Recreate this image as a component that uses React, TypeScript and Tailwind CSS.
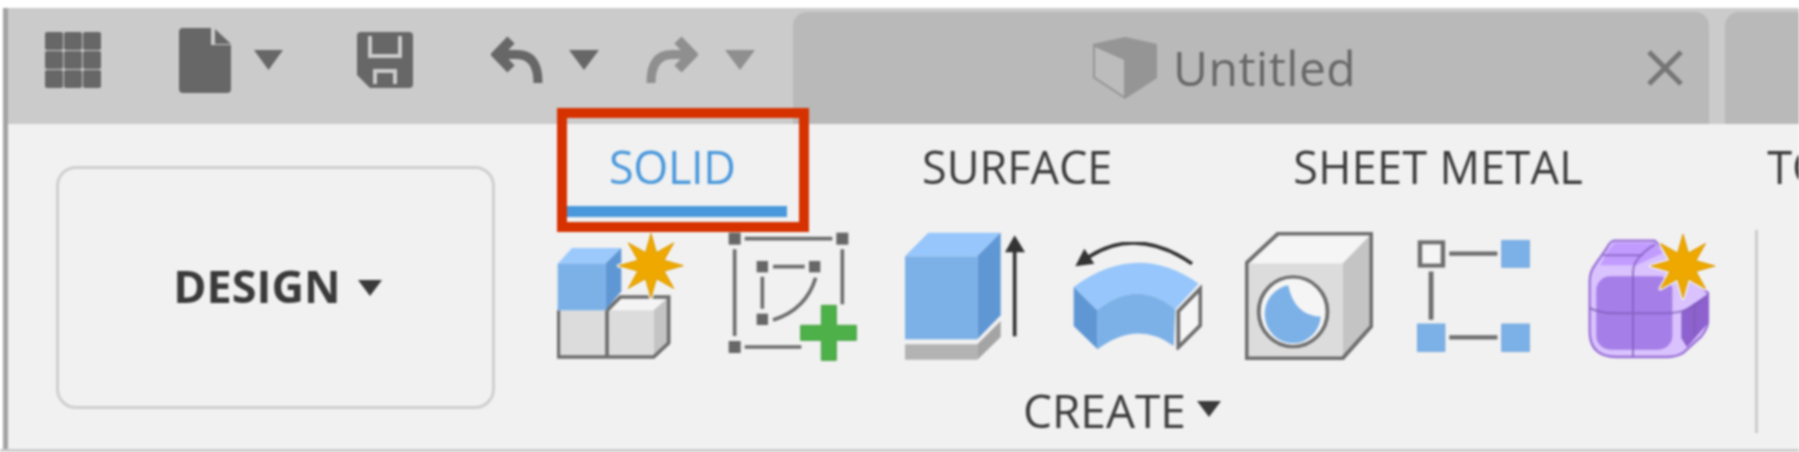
import React from 'react'

const tabs = [
  { label: 'SURFACE', gap: 'ml-[135px]' },
  { label: 'SHEET METAL', gap: 'ml-[181px] tracking-[0.3px]' },
  { label: 'TOOLS', gap: 'ml-[184px]' },
]

function Caret({ w, h, color, className }: { w: number; h: number; color: string; className?: string }) {
  return (
    <svg width={w} height={h} viewBox="0 0 30 20" preserveAspectRatio="none" className={`shrink-0 ${className ?? ''}`}>
      <polygon points="0,0 30,0 15,20" fill={color} />
    </svg>
  )
}

// eight pointed burst, used on the "new" icons
function Star({ cx, cy, r, halo = 11 }: { cx: number; cy: number; r: number; halo?: number }) {
  const pts: string[] = []
  for (let i = 0; i < 16; i++) {
    const a = (i * Math.PI) / 8 - Math.PI / 2
    const rad = i % 2 === 0 ? r : r * 0.44
    pts.push(`${cx + rad * Math.cos(a)},${cy + rad * Math.sin(a)}`)
  }
  const p = pts.join(' ')
  return (
    <g>
      <polygon points={p} fill="#f5f5f5" stroke="#f5f5f5" strokeWidth={halo} strokeLinejoin="round" />
      <polygon points={p} fill="#eea800" stroke="#d99a06" strokeWidth="3" />
    </g>
  )
}

function GridIcon() {
  const cells = [0, 19, 38]
  return (
    <svg width="56" height="56" viewBox="0 0 56 56" className="shrink-0">
      {cells.map((y) =>
        cells.map((x) => <rect key={`${x}-${y}`} x={x} y={y} width="18" height="18" rx="2" fill="#676767" />),
      )}
    </svg>
  )
}

function FileIcon() {
  return (
    <svg width="52" height="65" viewBox="0 0 52 65" className="shrink-0">
      <path d="M4 0H32V17H52V61Q52 65 48 65H4Q0 65 0 61V4Q0 0 4 0Z" fill="#676767" />
      <polygon points="36,1 52,16 36,16" fill="#676767" />
    </svg>
  )
}

function SaveIcon() {
  return (
    <svg width="56" height="56" viewBox="0 0 56 56" className="shrink-0">
      <path d="M4 0H52Q56 0 56 4V52Q56 56 52 56H13L0 43V4Q0 0 4 0Z" fill="#676767" />
      <path d="M13 4V24H43V4" fill="none" stroke="#cbcbcb" strokeWidth="4" />
      <path d="M18 52V39H38V52" fill="none" stroke="#cbcbcb" strokeWidth="4" />
    </svg>
  )
}

function UndoIcon({ color, flip }: { color: string; flip?: boolean }) {
  return (
    <svg width="52" height="48" viewBox="0 0 52 48" className={`shrink-0 ${flip ? '-scale-x-100' : ''}`}>
      <path d="M20 4L6 18.5L20 33" fill="none" stroke={color} strokeWidth="10" />
      <path d="M8 18.5H26Q47 18.5 47 47" fill="none" stroke={color} strokeWidth="9" />
    </svg>
  )
}

function CubeTabIcon() {
  return (
    <svg width="65" height="62" viewBox="0 0 65 62" className="shrink-0">
      <polygon points="1,7 33,0 65,7 65,41 33,62 1,41" fill="#959595" />
      <polygon points="3,10 32,23 32,59 3,40" fill="#bcbcbc" />
    </svg>
  )
}

function SolidNewIcon() {
  return (
    <svg width="127" height="127" viewBox="50 40 381 381" className="shrink-0">
      <polygon points="200,272 240,232 385,232 340,272" fill="#f4f4f4" />
      <polygon points="340,272 385,232 385,370 340,412" fill="#c4c4c4" />
      <rect x="52" y="272" width="288" height="140" fill="#dcdcdc" />
      <path d="M200 272L240 232H385V370L340 412H54V272M200 272V412" fill="none" stroke="#6e6e6e" strokeWidth="11" />
      <polygon points="52,132 95,85 243,85 195,132" fill="#9bc9fc" />
      <polygon points="195,132 243,85 243,215 195,272" fill="#5f97d5" />
      <rect x="52" y="132" width="143" height="140" fill="#7cb1e8" />
      <Star cx={332} cy={138} r={97} />
    </svg>
  )
}

function SketchIcon() {
  return (
    <svg width="129" height="129" viewBox="565 33 387 387" className="shrink-0">
      <g stroke="#6e6e6e" strokeWidth="11" fill="none">
        <path d="M615 53H878M585 85V345M908 85V250M615 378H785M700 137H795M668 167V263" />
        <path d="M828 170Q800 265 700 297" />
      </g>
      <g fill="#676767">
        <rect x="567" y="35" width="36" height="36" />
        <rect x="890" y="35" width="36" height="36" />
        <rect x="567" y="360" width="36" height="36" />
        <rect x="651" y="120" width="34" height="34" />
        <rect x="808" y="120" width="34" height="34" />
        <rect x="651" y="278" width="34" height="34" />
      </g>
      <path d="M845 253H890V313H950V358H890V418H845V358H783V313H845Z" fill="#4eb049" stroke="#46a241" strokeWidth="3" />
    </svg>
  )
}

function ExtrudeIcon() {
  return (
    <svg width="120" height="128" viewBox="75 35 360 384" className="shrink-0">
      <polygon points="75,372 292,372 292,418 75,418" fill="#b3b3b3" />
      <polygon points="292,372 362,302 362,350 292,418" fill="#a4a4a4" />
      <polygon points="75,108 145,37 362,37 292,108" fill="#96c6fb" />
      <polygon points="292,108 362,37 362,285 292,357" fill="#5f97d5" />
      <rect x="75" y="108" width="217" height="249" fill="#7cb1e8" />
      <path d="M404 348V90" stroke="#333" strokeWidth="11" />
      <polygon points="375,96 404,45 435,96" fill="#333" />
    </svg>
  )
}

function RevolveIcon() {
  return (
    <svg width="129" height="108" viewBox="578 60 387 324" className="shrink-0">
      <path d="M935 125Q770 12 625 105" fill="none" stroke="#333" strokeWidth="11" />
      <polygon points="585,133 642,125 612,80" fill="#333" />
      <path d="M580 195Q770 55 955 185L885 262Q770 167 650 265Z" fill="#96c6fb" />
      <path d="M650 265Q770 167 885 262L880 372Q770 293 652 382Z" fill="#7cb1e8" />
      <polygon points="580,195 650,265 652,382 580,312" fill="#5f97d5" />
      <polygon points="894,268 960,200 960,310 894,376" fill="#f5f5f5" stroke="#6e6e6e" strokeWidth="11" />
    </svg>
  )
}

function HoleIcon() {
  return (
    <svg width="128" height="128" viewBox="68 35 346 385" preserveAspectRatio="none" className="shrink-0">
      <polygon points="72,130 157,40 410,40 332,130" fill="#f5f5f5" />
      <polygon points="332,130 410,40 410,318 332,415" fill="#c4c4c4" />
      <rect x="72" y="130" width="260" height="285" fill="#dcdcdc" />
      <path d="M72 128L157 40H410V318L332 415H72Z" fill="none" stroke="#6e6e6e" strokeWidth="11" />
      <ellipse cx="198" cy="275" rx="93" ry="105" fill="#f5f5f5" stroke="#6e6e6e" strokeWidth="10" />
      <path d="M185 195A76 88 0 1 0 273 290Q200 285 185 195Z" fill="#7cb1e8" />
    </svg>
  )
}

function FormIcon() {
  return (
    <svg width="113" height="112" viewBox="533 60 305 337" preserveAspectRatio="none" className="shrink-0">
      <rect x="541" y="67" width="62" height="70" fill="#f5f5f5" stroke="#6e6e6e" strokeWidth="12" />
      <path d="M620 101H750M571 155V300M620 353H750" stroke="#6e6e6e" strokeWidth="13" />
      <g fill="#7cb1e8" stroke="#6fa5dc" strokeWidth="3">
        <rect x="762" y="61" width="74" height="81" />
        <rect x="534" y="313" width="74" height="82" />
        <rect x="762" y="313" width="74" height="82" />
      </g>
    </svg>
  )
}

function FormNewIcon() {
  return (
    <svg width="127" height="127" viewBox="25 25 381 381" className="shrink-0">
      <path d="M105 48H225L385 205V290Q385 310 365 335L310 385Q290 397 260 397H110Q30 397 30 320V170Q30 140 48 118L80 72Q92 48 105 48Z" fill="#d9c2fd" stroke="#9a72d8" strokeWidth="7" />
      <path d="M105 54H225L250 85L170 122H62L85 78Z" fill="#c29bff" />
      <rect x="50" y="155" width="228" height="220" rx="42" fill="#a67ee8" />
      <polygon points="305,262 385,208 385,295 322,368 305,340" fill="#8d61ce" />
      <g fill="none" stroke="#7f5db8" strokeWidth="6" opacity="0.75">
        <path d="M160 397V140Q160 100 225 60" />
        <path d="M30 250Q60 266 110 266H260Q330 266 385 210" />
        <path d="M345 235V335" />
        <path d="M70 92H190" />
      </g>
      <Star cx={310} cy={124} r={96} />
    </svg>
  )
}

export default function App() {
  return (
    <div className="h-[452px] w-full overflow-hidden bg-white pt-2 font-['Open_Sans',sans-serif] blur-[0.9px]">
      <div className="flex h-[441px] pl-[3px]">
        <div className="w-[5px] shrink-0 bg-[#a3a3a3]" />

        <div className="flex min-w-0 flex-1 flex-col">
          {/* Top bar */}
          <div className="flex h-[116px] shrink-0 items-start overflow-hidden bg-[#cbcbcb] pt-1">
            <div className="flex h-[96px] shrink-0 items-center">
              <div className="ml-[37px]"><GridIcon /></div>
              <div className="ml-[78px]"><FileIcon /></div>
              <Caret w={29} h={20} color="#676767" className="ml-[23px]" />
              <div className="ml-[74px]"><SaveIcon /></div>
              <div className="ml-[78px]"><UndoIcon color="#676767" /></div>
              <Caret w={30} h={20} color="#676767" className="ml-[26px]" />
              <div className="ml-[47px]"><UndoIcon color="#8f8f8f" flip /></div>
              <Caret w={30} h={20} color="#8f8f8f" className="ml-[27px]" />
            </div>

            <div className="ml-[38px] flex h-[112px] w-[916px] shrink-0 items-center rounded-t-[14px] bg-[#b9b9b9] pl-[299px] pr-[26px]">
              <CubeTabIcon />
              <span className="ml-4 text-[48px] font-medium leading-none tracking-[0.5px] text-[#686868]">Untitled</span>
              <svg width="36" height="36" viewBox="0 0 36 36" className="ml-auto shrink-0">
                <path d="M2 2L34 34M34 2L2 34" stroke="#757575" strokeWidth="5" />
              </svg>
            </div>
            <div className="ml-4 h-[112px] w-[200px] shrink-0 rounded-t-[14px] bg-[#b9b9b9]" />
          </div>

          {/* Ribbon */}
          <div className="flex flex-1 bg-[#f1f1f1]">
            <div className="ml-[48px] mt-[42px] flex h-[243px] w-[439px] shrink-0 items-center justify-center rounded-[20px] border-[3px] border-[#cfcfcf] pb-1">
              <span className="ml-1 text-[45px] font-bold leading-none text-[#3a3a3a]">DESIGN</span>
              <Caret w={24} h={16} color="#3a3a3a" className="ml-[17px] mt-1" />
            </div>

            <div className="ml-[62px] w-[1198px] shrink-0">
              <div className="flex h-[108px] whitespace-nowrap pl-[10px] text-[45px] font-medium leading-none text-[#3c3c3c]">
                <div className="relative z-10 flex h-[93px] w-[220px] shrink-0 flex-col border-b-[11px] border-[#4a98dc] pl-[42px] pt-5 tracking-[-0.4px] text-[#4a98dc]">
                  SOLID
                  <div className="absolute -top-4 left-[-10px] h-[124px] w-[252px] border-[10px] border-[#d63200]" />
                </div>
                {tabs.map((tab) => (
                  <div key={tab.label} className={`${tab.gap} shrink-0 pt-5`}>
                    {tab.label}
                  </div>
                ))}
              </div>

              <div className="flex h-[128px] items-center">
                <SolidNewIcon />
                <div className="ml-[44px]"><SketchIcon /></div>
                <div className="ml-[48px]"><ExtrudeIcon /></div>
                <div className="ml-[48px]"><RevolveIcon /></div>
                <div className="ml-[43px]"><HoleIcon /></div>
                <div className="ml-[44px]"><FormIcon /></div>
                <div className="ml-[58px]"><FormNewIcon /></div>
              </div>

              <div className="ml-[466px] mt-[27px] flex items-center text-[46px] font-medium leading-none text-[#3c3c3c]">
                CREATE
                <Caret w={24} h={16} color="#3a3a3a" className="ml-[11px] mb-[3px]" />
              </div>
            </div>

            <div className="mt-[106px] h-[203px] w-[3px] shrink-0 bg-[#cdcdcd]" />
          </div>
        </div>
      </div>
      <div className="h-[3px] bg-[#cccccc]" />
    </div>
  )
}
